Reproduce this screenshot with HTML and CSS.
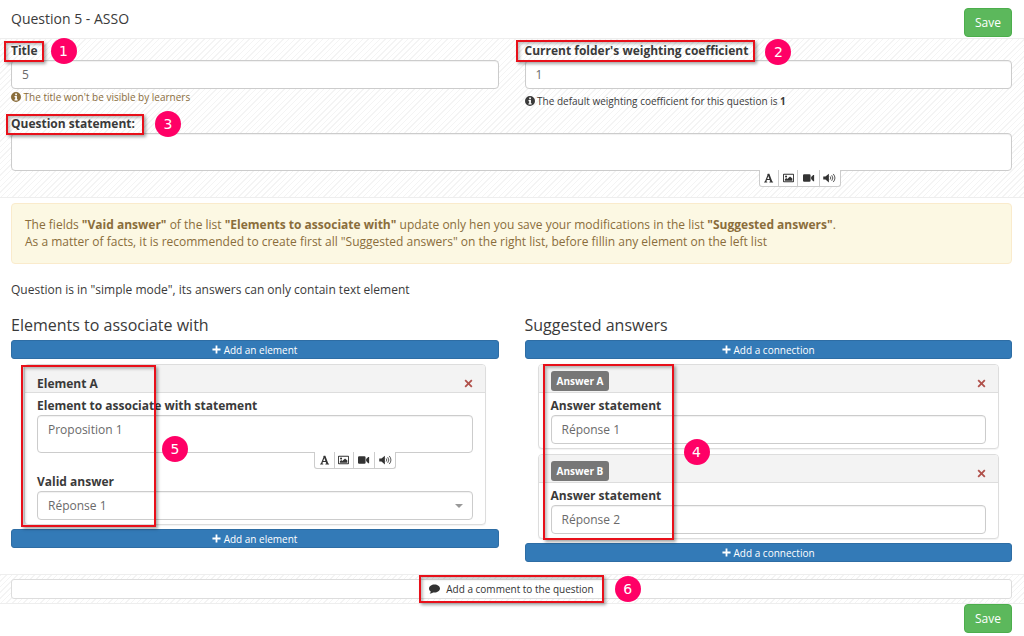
FILE: index.html
```html
<!DOCTYPE html>
<html lang="en">
<head>
<meta charset="utf-8">
<meta name="viewport" content="width=device-width, initial-scale=1">
<title>Question 5 - ASSO</title>
<link rel="stylesheet" href="styles.css">
</head>
<body>
<svg class="sprite" aria-hidden="true">
  <symbol id="i-info" viewBox="0 0 16 16"><path fill-rule="evenodd" d="M8 0a8 8 0 1 0 0 16A8 8 0 0 0 8 0ZM6.700 2.500h2.800v2.600H6.700ZM5.600 6.400h3.900v5h1.100v2.100h-5v-2.100h1.100V8.500H5.600Z"/></symbol>
  <symbol id="i-font" viewBox="0 0 16 16"><path fill-rule="evenodd" d="M7 1h2.400l4.600 12.500 1.300.3V15H9.400v-1.200l1.500-.3-.9-2.500H5.400l-.9 2.500 1.500.3V15H1v-1.200l1.300-.3L6.400 3 6 1.800ZM7.700 4.600 6 9.400h3.400Z"/></symbol>
  <symbol id="i-image" viewBox="0 0 18 16"><path fill-rule="evenodd" d="M1.500 1h15A1.500 1.500 0 0 1 18 2.500v11a1.500 1.500 0 0 1-1.500 1.500h-15A1.500 1.500 0 0 1 0 13.500v-11A1.500 1.500 0 0 1 1.500 1Zm0 1.500v11h15v-11ZM5 4a1.700 1.700 0 1 1 0 3.400A1.700 1.700 0 0 1 5 4Zm-2 8.400V10l2.300-2L7 9.700 11.500 5.500 15.300 9v3.400Z"/></symbol>
  <symbol id="i-video" viewBox="0 0 18 16"><path d="M2 2h8.500a1.800 1.800 0 0 1 1.800 1.800v8.400a1.800 1.800 0 0 1-1.800 1.800H2a1.800 1.800 0 0 1-1.800-1.800V3.800A1.800 1.800 0 0 1 2 2ZM13.200 6.500 16.500 3H18v10h-1.500l-3.300-3.500Z"/></symbol>
  <symbol id="i-sound" viewBox="0 0 20 16"><path d="M0 5.500h3.500L9 1v14l-5.500-4.500H0Z"/><path class="waves" d="M11 5.500q2.200 2.500 0 5M13.500 3.500q3.800 4.500 0 9M16 1.500q5.400 6.500 0 13"/></symbol>
  <symbol id="i-plus" viewBox="0 0 10 10"><path d="M4 .5h2V4h3.500v2H6v3.500H4V6H.5V4H4Z"/></symbol>
  <symbol id="i-times" viewBox="0 0 10 10"><path d="M2 .6 5 3.600 8 .6 9.400 2 6.400 5l3 3L8 9.400l-3-3-3 3L.6 8l3-3-3-3Z"/></symbol>
  <symbol id="i-comment" viewBox="0 0 16 14"><path d="M8 .5c4.400 0 8 2.600 8 5.800s-3.600 5.900-8 5.900c-.8 0-1.500-.1-2.200-.2C4.600 13 2.800 13.700 1 13.700c1-.9 1.500-1.900 1.600-2.900C1 9.700 0 8.100 0 6.300 0 3.100 3.600.5 8 .5Z"/></symbol>
</svg>

<header class="bar">
  <h1 class="page-title">Question 5 - ASSO</h1>
  <button class="save" type="submit">Save</button>
</header>

<main>
  <section class="hatched settings">
    <div class="columns">
      <div>
        <label class="label anchor" for="title">Title<span class="frame frame-title"></span><span class="pin pin-title">1</span></label>
        <input class="control" id="title" type="text" value="5">
        <p class="help help-warn"><svg class="icon"><use href="#i-info"/></svg> The title won't be visible by learners</p>
      </div>
      <div>
        <label class="label anchor" for="weight">Current folder's weighting coefficient<span class="frame frame-weight"></span><span class="pin pin-weight">2</span></label>
        <input class="control" id="weight" type="text" value="1">
        <p class="help help-spaced"><svg class="icon"><use href="#i-info"/></svg> The default weighting coefficient for this question is <b>1</b></p>
      </div>
    </div>
    <label class="label anchor" for="statement">Question statement:<span class="frame frame-statement"></span><span class="pin pin-statement">3</span></label>
    <textarea class="control area" id="statement"></textarea>
    <div class="tools">
      <button type="button" aria-label="Text"><svg class="icon"><use href="#i-font"/></svg></button>
      <button type="button" aria-label="Image"><svg class="icon"><use href="#i-image"/></svg></button>
      <button type="button" aria-label="Video"><svg class="icon wide"><use href="#i-video"/></svg></button>
      <button type="button" aria-label="Sound"><svg class="icon wide"><use href="#i-sound"/></svg></button>
    </div>
  </section>

  <div class="content">
    <div class="alert">The fields <b>"Vaid answer"</b> of the list <b>"Elements to associate with"</b> update only hen you save your modifications in the list <b>"Suggested answers"</b>.<br>As a matter of facts, it is recommended to create first all "Suggested answers" on the right list, before fillin any element on the left list</div>
    <p class="mode">Question is in "simple mode", its answers can only contain text element</p>

    <div class="columns">
      <section>
        <h2 class="list-title">Elements to associate with</h2>
        <button class="add" type="button"><svg class="icon plus"><use href="#i-plus"/></svg> Add an element</button>
        <div class="cards">
          <article class="card">
            <header class="card-head"><h3 class="card-name">Element A</h3><button class="remove" type="button" aria-label="Remove element A"><svg class="icon plus"><use href="#i-times"/></svg></button></header>
            <div class="card-body">
              <label class="label" for="element-a">Element to associate with statement</label>
              <textarea class="control area" id="element-a">Proposition 1</textarea>
              <div class="tools">
                <button type="button" aria-label="Text"><svg class="icon"><use href="#i-font"/></svg></button>
                <button type="button" aria-label="Image"><svg class="icon"><use href="#i-image"/></svg></button>
                <button type="button" aria-label="Video"><svg class="icon wide"><use href="#i-video"/></svg></button>
                <button type="button" aria-label="Sound"><svg class="icon wide"><use href="#i-sound"/></svg></button>
              </div>
              <label class="label" for="valid-a">Valid answer</label>
              <div class="select"><select class="control" id="valid-a"><option>Réponse 1</option><option>Réponse 2</option></select></div>
            </div>
          </article>
          <span class="frame frame-elements"></span><span class="pin pin-elements">5</span>
        </div>
        <button class="add" type="button"><svg class="icon plus"><use href="#i-plus"/></svg> Add an element</button>
      </section>

      <section>
        <h2 class="list-title">Suggested answers</h2>
        <button class="add" type="button"><svg class="icon plus"><use href="#i-plus"/></svg> Add a connection</button>
        <div class="cards">
          <article class="card">
            <header class="card-head"><h3 class="tag">Answer A</h3><button class="remove" type="button" aria-label="Remove answer A"><svg class="icon plus"><use href="#i-times"/></svg></button></header>
            <div class="card-body">
              <label class="label" for="answer-a">Answer statement</label>
              <input class="control" id="answer-a" type="text" value="Réponse 1">
            </div>
          </article>
          <article class="card">
            <header class="card-head"><h3 class="tag">Answer B</h3><button class="remove" type="button" aria-label="Remove answer B"><svg class="icon plus"><use href="#i-times"/></svg></button></header>
            <div class="card-body">
              <label class="label" for="answer-b">Answer statement</label>
              <input class="control" id="answer-b" type="text" value="Réponse 2">
            </div>
          </article>
          <span class="frame frame-answers"></span><span class="pin pin-answers">4</span>
        </div>
        <button class="add" type="button"><svg class="icon plus"><use href="#i-plus"/></svg> Add a connection</button>
      </section>
    </div>
  </div>

  <section class="hatched comment-bar">
    <button class="comment" type="button"><span class="anchor comment-text"><svg class="icon"><use href="#i-comment"/></svg>Add a comment to the question<span class="frame frame-comment"></span><span class="pin pin-comment">6</span></span></button>
  </section>
</main>

<footer class="bar bar-bottom"><button class="save" type="submit">Save</button></footer>
</body>
</html>
```

FILE: styles.css
```css
*, *::before, *::after { box-sizing: border-box; }

body {
  margin: 0;
  background: #fff;
  color: #3a3a3a;
  font: 12px/17px "Open Sans", "Noto Sans", sans-serif;
}

h1, h2, h3, p { margin: 0; font-weight: 400; }
button, input, select, textarea { font: inherit; }
button { cursor: pointer; }
.sprite { position: absolute; width: 0; height: 0; }

.icon {
  width: 11px;
  height: 10px;
  flex: none;
  fill: currentColor;
  vertical-align: -1px;
}
.icon.wide { width: 13px; }
.icon.plus { width: 9px; height: 9px; vertical-align: 0; }
.waves { fill: none; stroke: currentColor; stroke-width: 1.3; }

.bar {
  display: flex;
  justify-content: space-between;
  align-items: flex-start;
  height: 38px;
  padding: 8px 12px 0 11px;
}
.bar-bottom { height: auto; justify-content: flex-end; padding-top: 0; }
.page-title { font-size: 14px; line-height: 22px; }
.save {
  height: 29px;
  padding: 0 10px;
  border: 1px solid #4cae4c;
  border-radius: 4px;
  background: #5cb85c;
  color: #fff;
}

.hatched {
  border: solid #eee;
  border-width: 1px 0;
  background: repeating-linear-gradient(135deg, #f4f4f4 0 1px, #fff 1px 4px);
}
.settings { padding: 3px 12px 10px 11px; }
.columns {
  display: grid;
  grid-template-columns: 1fr 1fr;
  gap: 26px;
  align-items: start;
}

.label {
  display: table;
  font-weight: 700;
  line-height: 18px;
}
.control {
  display: block;
  width: 100%;
  height: 29px;
  padding: 0 10px;
  border: 1px solid #ccc;
  border-radius: 4px;
  background: #fff;
  box-shadow: inset 0 1px 1px rgba(0, 0, 0, .06);
  color: #6a6a6a;
}
.area { height: 38px; padding: 5px 10px; resize: none; overflow: hidden; }

.help { height: 26px; font-size: 10px; line-height: 16px; }
.help .icon { width: 10px; vertical-align: -1px; }
.help-warn { color: #8a6d3b; }
.help-spaced { padding-top: 4px; }

.tools {
  position: relative;
  display: flex;
  width: 82px;
  height: 17px;
  margin: -1px calc(16.8% + 3px) 0 auto;
  border: 1px solid #ccc;
  border-top: 0;
  border-radius: 0 0 3px 3px;
  background: #fff;
}
.tools button {
  display: flex;
  flex: 1 1 auto;
  align-items: center;
  justify-content: center;
  padding: 0 3px 1px;
  border: 0;
  background: none;
  color: #333;
}
.tools button + button { border-left: 1px solid #ccc; }

.content { padding: 5px 12px 12px 11px; }
.alert {
  padding: 12px 13px 13px;
  border: 1px solid #faebcc;
  border-radius: 4px;
  background: #fcf8e3;
  color: #8a6d3b;
}
.mode { margin: 17px 0; }
.list-title { font-size: 16px; line-height: 20px; margin-bottom: 5px; }

.add {
  display: block;
  width: 100%;
  height: 19px;
  padding: 0;
  border: 1px solid #2e6da4;
  border-radius: 3px;
  background: #337ab7;
  color: #fff;
  font-size: 10px;
  line-height: 16px;
}
.cards {
  position: relative;
  display: flex;
  flex-direction: column;
  gap: 5px;
  margin: 5px 13px 4px;
}
.card {
  border: 1px solid #ddd;
  border-radius: 4px;
  background: #fff;
  box-shadow: 0 1px 1px rgba(0, 0, 0, .05);
}
.card-head {
  display: flex;
  align-items: center;
  justify-content: space-between;
  height: 28px;
  padding: 0 12px;
  border-bottom: 1px solid #ddd;
  border-radius: 3px 3px 0 0;
  background: #f3f3f3;
}
.card-name { padding-top: 10px; font-size: 12px; font-weight: 700; }
.tag {
  align-self: flex-end;
  margin-bottom: 1px;
  padding: 0 6px;
  border-radius: 3px;
  background: #777;
  color: #fff;
  font-size: 10px;
  font-weight: 700;
  line-height: 20px;
}
.remove {
  padding: 10px 0 0;
  border: 0;
  background: none;
  color: #b0504a;
  line-height: 17px;
}
.card-body { padding: 4px 12px; }
.card-body .tools { margin-bottom: 4px; }

.select { position: relative; }
.select select { appearance: none; }
.select::after {
  content: "";
  position: absolute;
  top: 13px;
  right: 10px;
  border: solid transparent;
  border-width: 4px 4px 0;
  border-top-color: #999;
  pointer-events: none;
}

.comment-bar { padding: 4px 12px 4px 11px; }
.comment {
  display: block;
  width: 100%;
  height: 20px;
  padding: 0;
  border: 1px solid #ddd;
  border-radius: 3px;
  background: #fff;
  color: #333;
  font-size: 10px;
  line-height: 16px;
}
.comment-text { display: inline-flex; align-items: center; gap: 6px; }

/* Numbered callouts laid over the form */
.anchor { position: relative; }
.frame {
  position: absolute;
  border: 2px solid #e8101a;
  box-shadow: 2px 2px 3px rgba(0, 0, 0, .35), inset 2px 2px 3px rgba(0, 0, 0, .25);
  pointer-events: none;
}
.pin {
  position: absolute;
  width: 26px;
  height: 26px;
  border-radius: 50%;
  background: #ff0066;
  color: #fff;
  font: 14px/26px "DejaVu Sans", sans-serif;
  text-align: center;
}
.frame-title { inset: -1px -6px -2px -7px; }
.pin-title { top: -4px; left: calc(100% + 13px); }
.frame-weight { inset: -2px -7px -2px -9px; }
.pin-weight { top: -3px; left: calc(100% + 17px); }
.frame-statement { inset: -1px -9px -2px -5px; }
.pin-statement { top: -4px; left: calc(100% + 20px); }
.frame-elements { top: 1px; bottom: -2px; left: -3px; width: 135px; }
.pin-elements { top: 72px; left: 138px; }
.frame-answers { top: 0; bottom: -1px; left: 5px; width: 131px; }
.pin-answers { top: 75px; left: 146px; }
.frame-comment { inset: -6px -10px; }
.pin-comment { top: -5px; left: calc(100% + 21px); }
```
